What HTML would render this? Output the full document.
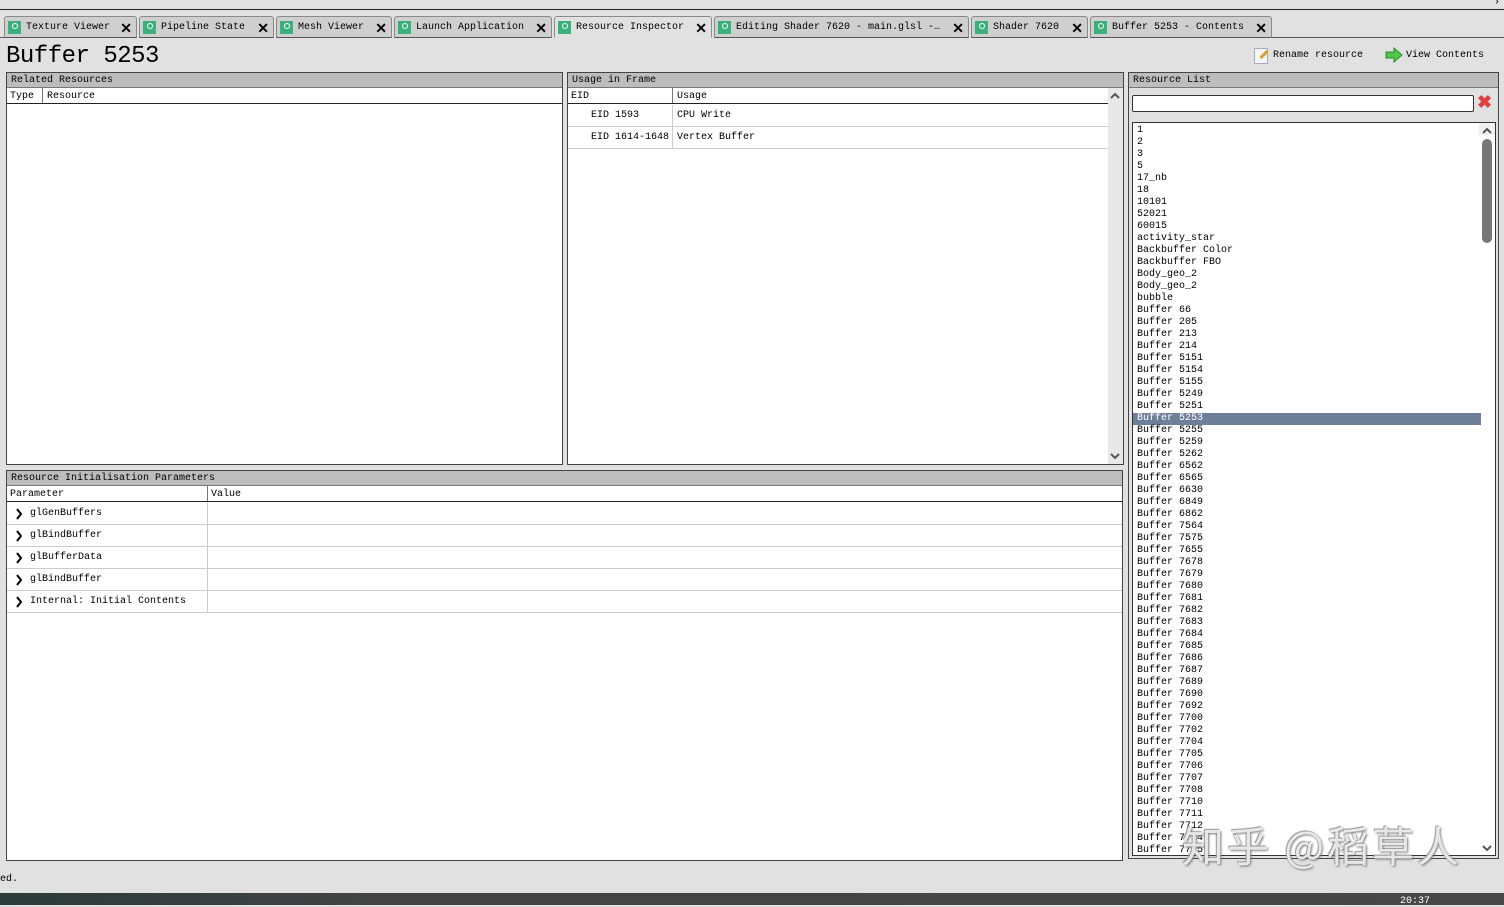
<!DOCTYPE html>
<html><head><meta charset="utf-8"><style>
*{margin:0;padding:0;box-sizing:border-box}
body{width:1504px;height:905px;background:#e1e1e1;position:relative;overflow:hidden;font-family:"Liberation Mono","Noto Sans CJK SC",monospace;font-size:10px;color:#000}
.a{position:absolute}
.tab{position:absolute;top:16px;height:22px;background:#cfcfcf;border:1px solid #8a8a8a;border-bottom:1px solid #555;border-radius:3px 3px 0 0;line-height:22px;padding-left:21px;white-space:nowrap}
.tab i{position:absolute;left:3px;top:4px;width:13px;height:13px;background:#3bb07a}
.tab i:after{content:"";position:absolute;left:4px;top:2px;width:4px;height:4px;border:1px solid #fff;border-radius:50%}
.tab b{position:absolute;right:4px;top:0;font-size:14px;font-weight:bold;font-family:"Liberation Sans",sans-serif}
.panel{position:absolute;border:1px solid #444;background:#fff}
.ph{position:absolute;left:0;right:0;top:0;height:15px;background:#bdbdbd;border-bottom:1px solid #777;line-height:16px;padding-left:4px}
.ch{position:absolute;left:0;right:0;height:16px;border-bottom:1px solid #222;line-height:17px}
.row{position:absolute;left:0;right:0;height:22px;border-bottom:1px solid #ccc;line-height:22px}
.row svg{position:absolute;left:8px;top:5px}
.row .t{position:absolute;left:23px}
.list div{height:12px;line-height:12px;padding-left:4px;white-space:nowrap}
</style></head><body>
<div class="a" style="left:0;top:9px;width:1504px;height:1px;background:#222"></div>
<div class="a" style="right:4px;top:-3px;font-size:10px">›</div>
<div class="tab" style="left:4px;width:133px"><i></i>Texture Viewer<b>✕</b></div>
<div class="tab" style="left:139px;width:135px"><i></i>Pipeline State<b>✕</b></div>
<div class="tab" style="left:276px;width:116px"><i></i>Mesh Viewer<b>✕</b></div>
<div class="tab" style="left:394px;width:158px"><i></i>Launch Application<b>✕</b></div>
<div class="tab" style="left:554px;width:158px;background:#e1e1e1;border-bottom-color:#e1e1e1"><i></i>Resource Inspector<b>✕</b></div>
<div class="tab" style="left:714px;width:255px"><i></i>Editing Shader 7620 - main.glsl -…<b>✕</b></div>
<div class="tab" style="left:971px;width:117px"><i></i>Shader 7620<b>✕</b></div>
<div class="tab" style="left:1090px;width:182px"><i></i>Buffer 5253 - Contents<b>✕</b></div>
<div class="a" style="left:1272px;top:37px;width:232px;height:1px;background:#555"></div>
<div class="a" style="left:0;top:37px;width:4px;height:1px;background:#555"></div>

<div class="a" style="left:6px;top:43px;font-size:24px;line-height:28px;font-family:'Liberation Mono',monospace;letter-spacing:-0.5px">Buffer 5253</div>
<div class="a" style="left:1254px;top:48px;width:14px;height:16px;background:#f4f4f4;border:1px solid #aab"></div>
<div class="a" style="left:1259px;top:53px;width:10px;height:3px;background:#d8a030;transform:rotate(-45deg)"></div>
<div class="a" style="left:1273px;top:50px">Rename resource</div>
<svg class="a" style="left:1385px;top:47px" width="18" height="16"><path d="M1 5h8V1l8 7-8 7v-4H1z" fill="#4fc94a" stroke="#2a8a2a"/></svg>
<div class="a" style="left:1406px;top:50px">View Contents</div>

<div class="panel" style="left:6px;top:72px;width:557px;height:393px">
<div class="ph">Related Resources</div>
<div class="ch" style="top:15px"><span style="padding-left:3px">Type</span><span class="a" style="left:35px;top:0;height:15px;border-left:1px solid #777;padding-left:4px">Resource</span></div>
</div>

<div class="panel" style="left:567px;top:72px;width:557px;height:393px">
<div class="ph">Usage in Frame</div>
<div class="ch" style="top:15px;right:15px"><span style="padding-left:3px">EID</span><span class="a" style="left:104px;top:0;height:15px;border-left:1px solid #777;padding-left:4px">Usage</span></div>
<div class="row" style="top:32px;right:15px"><span style="padding-left:23px">EID 1593</span><span class="a" style="left:104px;top:0;height:21px;border-left:1px solid #ccc;padding-left:4px">CPU Write</span></div>
<div class="row" style="top:54px;right:15px"><span style="padding-left:23px">EID 1614-1648</span><span class="a" style="left:104px;top:0;height:21px;border-left:1px solid #ccc;padding-left:4px">Vertex Buffer</span></div>
<div class="a" style="right:0;top:15px;width:15px;bottom:0;background:#e8e8e8"></div>
<svg class="a" style="right:3px;top:19px" width="10" height="7"><path d="M1 6l4-4 4 4" fill="none" stroke="#555" stroke-width="2"/></svg>
<svg class="a" style="right:3px;bottom:4px" width="10" height="7"><path d="M1 1l4 4 4-4" fill="none" stroke="#555" stroke-width="2"/></svg>
</div>

<div class="panel" style="left:6px;top:470px;width:1117px;height:391px">
<div class="ph">Resource Initialisation Parameters</div>
<div class="ch" style="top:15px"><span style="padding-left:3px">Parameter</span><span class="a" style="left:200px;top:0;height:15px;border-left:1px solid #777;padding-left:3px">Value</span></div>
<div class="row" style="top:32px"><svg width="8" height="12"><path d="M2 1l4 5-4 5" fill="none" stroke="#000" stroke-width="2"/></svg><span class="t">glGenBuffers</span><span class="a" style="left:200px;top:0;height:21px;border-left:1px solid #ccc"></span></div>
<div class="row" style="top:54px"><svg width="8" height="12"><path d="M2 1l4 5-4 5" fill="none" stroke="#000" stroke-width="2"/></svg><span class="t">glBindBuffer</span><span class="a" style="left:200px;top:0;height:21px;border-left:1px solid #ccc"></span></div>
<div class="row" style="top:76px"><svg width="8" height="12"><path d="M2 1l4 5-4 5" fill="none" stroke="#000" stroke-width="2"/></svg><span class="t">glBufferData</span><span class="a" style="left:200px;top:0;height:21px;border-left:1px solid #ccc"></span></div>
<div class="row" style="top:98px"><svg width="8" height="12"><path d="M2 1l4 5-4 5" fill="none" stroke="#000" stroke-width="2"/></svg><span class="t">glBindBuffer</span><span class="a" style="left:200px;top:0;height:21px;border-left:1px solid #ccc"></span></div>
<div class="row" style="top:120px"><svg width="8" height="12"><path d="M2 1l4 5-4 5" fill="none" stroke="#000" stroke-width="2"/></svg><span class="t">Internal: Initial Contents</span><span class="a" style="left:200px;top:0;height:21px;border-left:1px solid #ccc"></span></div>
</div>

<div class="panel" style="left:1128px;top:72px;width:371px;height:787px;background:#e1e1e1">
<div class="ph">Resource List</div>
<div class="a" style="left:3px;top:22px;width:342px;height:17px;background:#fff;border:1px solid #333;border-radius:2px"></div>
<div class="a" style="left:348px;top:19px;color:#e04040;font-size:18px;font-weight:bold;font-family:'Liberation Sans',sans-serif">✖</div>
<div class="a list" style="left:3px;top:49px;width:364px;height:734px;background:#fff;border:1px solid #333;overflow:hidden;padding-top:2px">
<div>1</div><div>2</div><div>3</div><div>5</div><div>17_nb</div><div>18</div><div>10101</div><div>52021</div><div>60015</div><div>activity_star</div><div>Backbuffer Color</div><div>Backbuffer FBO</div><div>Body_geo_2</div><div>Body_geo_2</div><div>bubble</div><div>Buffer 66</div><div>Buffer 205</div><div>Buffer 213</div><div>Buffer 214</div><div>Buffer 5151</div><div>Buffer 5154</div><div>Buffer 5155</div><div>Buffer 5249</div><div>Buffer 5251</div><div style="background:#6e7f9a;color:#fff;width:348px">Buffer 5253</div><div>Buffer 5255</div><div>Buffer 5259</div><div>Buffer 5262</div><div>Buffer 6562</div><div>Buffer 6565</div><div>Buffer 6630</div><div>Buffer 6849</div><div>Buffer 6862</div><div>Buffer 7564</div><div>Buffer 7575</div><div>Buffer 7655</div><div>Buffer 7678</div><div>Buffer 7679</div><div>Buffer 7680</div><div>Buffer 7681</div><div>Buffer 7682</div><div>Buffer 7683</div><div>Buffer 7684</div><div>Buffer 7685</div><div>Buffer 7686</div><div>Buffer 7687</div><div>Buffer 7689</div><div>Buffer 7690</div><div>Buffer 7692</div><div>Buffer 7700</div><div>Buffer 7702</div><div>Buffer 7704</div><div>Buffer 7705</div><div>Buffer 7706</div><div>Buffer 7707</div><div>Buffer 7708</div><div>Buffer 7710</div><div>Buffer 7711</div><div>Buffer 7712</div><div>Buffer 7714</div><div>Buffer 7715</div>
<div class="a" style="right:0;top:0;width:16px;bottom:0;background:#f0f0f0"></div>
<div class="a" style="right:3px;top:16px;width:10px;height:104px;background:#777;border-radius:5px"></div>
<svg class="a" style="right:3px;top:4px" width="10" height="7"><path d="M1 6l4-4 4 4" fill="none" stroke="#555" stroke-width="2"/></svg>
<svg class="a" style="right:3px;bottom:3px" width="10" height="7"><path d="M1 1l4 4 4-4" fill="none" stroke="#555" stroke-width="2"/></svg>
</div>
</div>

<div class="a" style="left:1182px;top:814px;font-family:'Noto Sans CJK SC',sans-serif;font-size:42px;letter-spacing:3px;color:rgba(255,255,255,.8);text-shadow:1px 1px 2px #777,-1px -1px 1px #999">知乎 @稻草人</div>
<div class="a" style="left:0;top:874px">ed.</div>
<div class="a" style="left:0;top:893px;width:1504px;height:12px;background:linear-gradient(90deg,#2b3a3a,#444 25%,#474747)"></div>
<div class="a" style="left:1400px;top:896px;color:#fff;font-size:10px">20:37</div>
</body></html>
